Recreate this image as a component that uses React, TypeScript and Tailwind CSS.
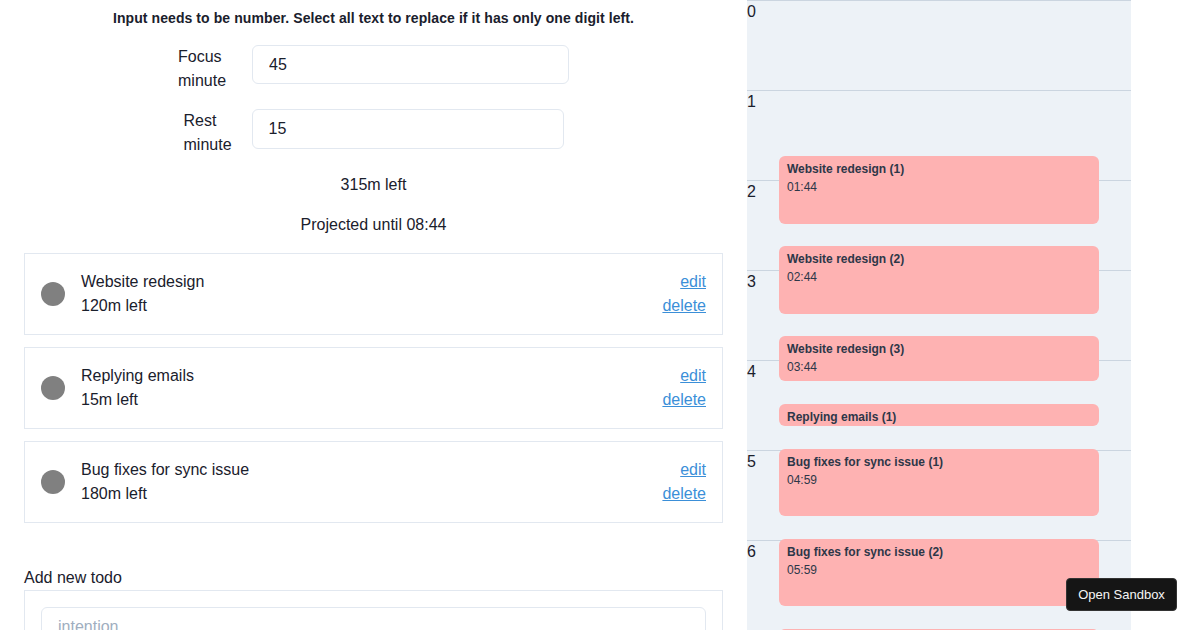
import React from "react";

interface Todo {
  name: string;
  left: number;
}

interface Slot {
  title: string;
  start: number; // minutes from midnight
  length: number;
  time: string;
}

const todos: Todo[] = [
  { name: "Website redesign", left: 120 },
  { name: "Replying emails", left: 15 },
  { name: "Bug fixes for sync issue", left: 180 },
];

const slots: Slot[] = [
  { title: "Website redesign (1)", start: 104, length: 45, time: "01:44" },
  { title: "Website redesign (2)", start: 164, length: 45, time: "02:44" },
  { title: "Website redesign (3)", start: 224, length: 30, time: "03:44" },
  { title: "Replying emails (1)", start: 269, length: 15, time: "" },
  { title: "Bug fixes for sync issue (1)", start: 299, length: 45, time: "04:59" },
  { title: "Bug fixes for sync issue (2)", start: 359, length: 45, time: "05:59" },
  { title: "Bug fixes for sync issue (3)", start: 419, length: 45, time: "06:59" },
  { title: "Bug fixes for sync issue (4)", start: 479, length: 45, time: "07:59" },
];

const PX_PER_MIN = 1.5;

const TodoCard: React.FC<{ todo: Todo }> = ({ todo }) => (
  <div className="flex items-center border border-[#e2e8f0] px-4 py-4">
    <div className="h-6 w-6 flex-shrink-0 rounded-full bg-[#808080]" />
    <div className="ml-4 flex-1 leading-6">
      <p>{todo.name}</p>
      <p>{todo.left}m left</p>
    </div>
    <div className="flex flex-col items-end leading-6 text-[#3b8fd8]">
      <a href="#" className="underline">
        edit
      </a>
      <a href="#" className="underline">
        delete
      </a>
    </div>
  </div>
);

const Calendar: React.FC = () => (
  <div className="relative w-[384px] flex-shrink-0 bg-[#edf2f7]">
    {Array.from({ length: 24 }, (_, h) => (
      <div key={h} className="h-[90px] border-t border-[#cbd5e0] text-base leading-[22px] text-[#1a202c]">
        {h}
      </div>
    ))}
    {slots.map((s) => (
      <div
        key={s.title}
        className="absolute left-8 w-[320px] overflow-hidden rounded-md bg-[#feb2b2] px-2 pt-1 text-xs leading-[18px] text-[#2d3748]"
        style={{ top: s.start * PX_PER_MIN, height: s.length * PX_PER_MIN }}
      >
        <p className="font-bold">{s.title}</p>
        {s.time && <p>{s.time}</p>}
      </div>
    ))}
  </div>
);

export default function App() {
  return (
    <div className="relative flex h-[630px] overflow-hidden bg-white font-['Liberation_Sans',Arial,sans-serif] text-base text-[#1a202c]">
      <div className="w-[747px] flex-shrink-0 px-6 pt-2">
        <p className="text-center text-sm font-bold leading-5 tracking-[0.006em]">
          Input needs to be number. Select all text to replace if it has only one digit left.
        </p>

        <div className="mt-[17px] flex items-start justify-center gap-[27px]">
          <label className="w-[47px] leading-6">
            Focus
            <br />
            minute
          </label>
          <input
            defaultValue="45"
            className="h-[39px] w-[317px] rounded-md border border-[#e2e8f0] px-4 outline-none"
          />
        </div>

        <div className="mt-4 flex items-start justify-center gap-[21px]">
          <label className="w-[47px] leading-6">
            Rest
            <br />
            minute
          </label>
          <input
            defaultValue="15"
            className="h-[40px] w-[312px] rounded-md border border-[#e2e8f0] px-4 outline-none"
          />
        </div>

        <p className="mt-4 text-center leading-6">315m left</p>
        <p className="mt-4 text-center leading-6">Projected until 08:44</p>

        <div className="mt-4 flex flex-col gap-3">
          {todos.map((t) => (
            <TodoCard key={t.name} todo={t} />
          ))}
        </div>

        <p className="mt-[43px] leading-6">Add new todo</p>
        <div className="border border-[#e2e8f0] p-4">
          <input
            placeholder="intention"
            className="h-10 w-full rounded-md border border-[#e2e8f0] px-4 outline-none placeholder:text-[#a0aec0]"
          />
        </div>
      </div>

      <Calendar />

      <button className="absolute bottom-[19px] right-[23px] h-[33px] w-[111px] rounded border border-[#333] bg-[#151515] text-[13px] text-[#f5f5f5]">
        Open Sandbox
      </button>
    </div>
  );
}
